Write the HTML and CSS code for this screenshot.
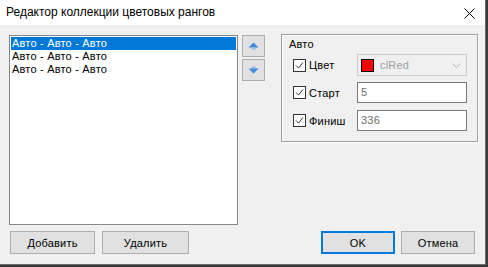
FILE: index.html
```html
<!DOCTYPE html>
<html>
<head>
<meta charset="utf-8">
<link rel="stylesheet" href="styles.css">
</head>
<body>
<div class="window">
  <div class="titlebar">
    <span class="title">Редактор коллекции цветовых рангов</span>
    <svg class="close" width="11" height="11" viewBox="0 0 11 11"><path d="M0.5 0.5L10.5 10.5M10.5 0.5L0.5 10.5" stroke="#000" stroke-width="1" fill="none"/></svg>
  </div>
  <div class="content">
    <div class="main">
      <div class="listbox">
        <div class="item selected">Авто - Авто - Авто</div>
        <div class="item">Авто - Авто - Авто</div>
        <div class="item">Авто - Авто - Авто</div>
      </div>
      <div class="arrows">
        <div class="arrow-btn">
          <svg width="11" height="8" viewBox="0 0 11 8"><path d="M5.5 0.5L10.5 5.5H0.5Z" fill="#3f88e0"/><path d="M3.5 5.5H7.5V7.5H3.5Z" fill="#8fbcef"/></svg>
        </div>
        <div class="arrow-btn">
          <svg width="11" height="8" viewBox="0 0 11 8"><path d="M3.5 0.5H7.5V2.5H3.5Z" fill="#8fbcef"/><path d="M5.5 7.5L10.5 2.5H0.5Z" fill="#3f88e0"/></svg>
        </div>
      </div>
      <div class="group">
        <div class="caption">Авто</div>
        <div class="row row-color">
          <label class="check"><span class="box"><svg width="11" height="11" viewBox="0 0 11 11"><path d="M2 5.5L4.5 8L9 2.5" stroke="#333" stroke-width="1" fill="none"/></svg></span>Цвет</label>
          <div class="combo"><span class="swatch"></span><span class="combo-text">clRed</span><svg class="chev" width="9" height="5" viewBox="0 0 9 5"><path d="M0.5 0.5L4.5 4.5L8.5 0.5" stroke="#b5b5b5" fill="none"/></svg></div>
        </div>
        <div class="row row-start">
          <label class="check"><span class="box"><svg width="11" height="11" viewBox="0 0 11 11"><path d="M2 5.5L4.5 8L9 2.5" stroke="#333" stroke-width="1" fill="none"/></svg></span>Старт</label>
          <div class="edit">5</div>
        </div>
        <div class="row row-finish">
          <label class="check"><span class="box"><svg width="11" height="11" viewBox="0 0 11 11"><path d="M2 5.5L4.5 8L9 2.5" stroke="#333" stroke-width="1" fill="none"/></svg></span>Финиш</label>
          <div class="edit">336</div>
        </div>
      </div>
    </div>
    <div class="footer">
      <div class="btn btn-add">Добавить</div>
      <div class="btn btn-del">Удалить</div>
      <div class="spacer"></div>
      <div class="btn btn-ok">OK</div>
      <div class="btn btn-cancel">Отмена</div>
    </div>
  </div>
</div>
</body>
</html>
```

FILE: styles.css
```css
html, body {
  margin: 0;
  padding: 0;
}
body {
  width: 488px;
  height: 267px;
  background: #3a3a3a;
  overflow: hidden;
  font-family: "Liberation Sans", Arial, sans-serif;
  font-size: 11px;
  letter-spacing: 0.2px;
  color: #000;
}
.window {
  width: 485px;
  height: 264px;
  border-right: 1px solid #6b6b6b;
  border-bottom: 1px solid #6b6b6b;
  background: #f0f0f0;
  display: flex;
  flex-direction: column;
}
.titlebar {
  height: 25px;
  background: #fff;
  display: flex;
  align-items: center;
  padding: 0 9px 0 6px;
}
.title {
  font-family: "Liberation Sans", Arial, sans-serif;
  font-size: 12px;
  letter-spacing: 0;
  flex: 1;
  position: relative;
  top: -1px;
}
.close {
  margin-right: 1px;
  position: relative;
  top: 1px;
}
.content {
  padding: 10px 0 0 9px;
  display: flex;
  flex-direction: column;
}
.main {
  display: flex;
  align-items: flex-start;
}
.listbox {
  width: 225px;
  height: 186px;
  border: 1px solid #828790;
  background: #fff;
  padding: 1px;
}
.item {
  height: 13px;
  line-height: 13px;
  padding-left: 1px;
  white-space: nowrap;
}
.item.selected {
  background: #0078d7;
  color: #fff;
}
.arrows {
  margin-left: 4px;
  display: flex;
  flex-direction: column;
  gap: 2px;
}
.arrow-btn {
  width: 21px;
  height: 20px;
  border: 1px solid #adadad;
  background: #e1e1e1;
  display: flex;
  align-items: center;
  justify-content: center;
}
.group {
  margin-left: 16px;
  margin-top: -1px;
  width: 195px;
  height: 106px;
  border: 1px solid #a0a0a0;
  box-shadow: inset 1px 1px 0 #fff, 1px 1px 0 #fff;
  display: flex;
  flex-direction: column;
}
.caption {
  height: 13px;
  line-height: 13px;
  margin: 3px 0 0 7px;
}
.row {
  display: flex;
  align-items: center;
  margin-left: 11px;
}
.row-color {
  margin-top: 3px;
  height: 22px;
}
.row-start {
  margin-top: 6px;
  height: 21px;
}
.row-finish {
  margin-top: 7px;
  height: 21px;
}
.check {
  width: 64px;
  display: flex;
  align-items: center;
}
.box {
  width: 11px;
  height: 11px;
  border: 1px solid #333;
  background: #fff;
  margin-right: 3px;
  display: flex;
}
.combo {
  width: 108px;
  height: 20px;
  border: 1px solid #cccccc;
  background: #f0f0f0;
  display: flex;
  align-items: center;
}
.swatch {
  width: 11px;
  height: 11px;
  border: 1px solid #000;
  background: #ff0000;
  margin-left: 3px;
}
.combo-text {
  margin-left: 6px;
  color: #a0a0a0;
  flex: 1;
}
.chev {
  margin-right: 5px;
}
.edit {
  width: 105px;
  height: 19px;
  border: 1px solid #7a7a7a;
  background: #fff;
  color: #6d6d6d;
  line-height: 19px;
  padding-left: 3px;
}
.footer {
  margin-top: 6px;
  display: flex;
  padding-left: 1px;
}
.btn {
  height: 21px;
  border: 1px solid #adadad;
  background: #e1e1e1;
  display: flex;
  align-items: center;
  justify-content: center;
}
.btn-add { width: 83px; }
.btn-del { width: 85px; margin-left: 7px; }
.spacer { flex: 1; }
.btn-ok {
  width: 70px;
  height: 19px;
  border: 2px solid #0078d7;
}
.btn-cancel { width: 72px; margin-left: 6px; margin-right: 10px; }
```
